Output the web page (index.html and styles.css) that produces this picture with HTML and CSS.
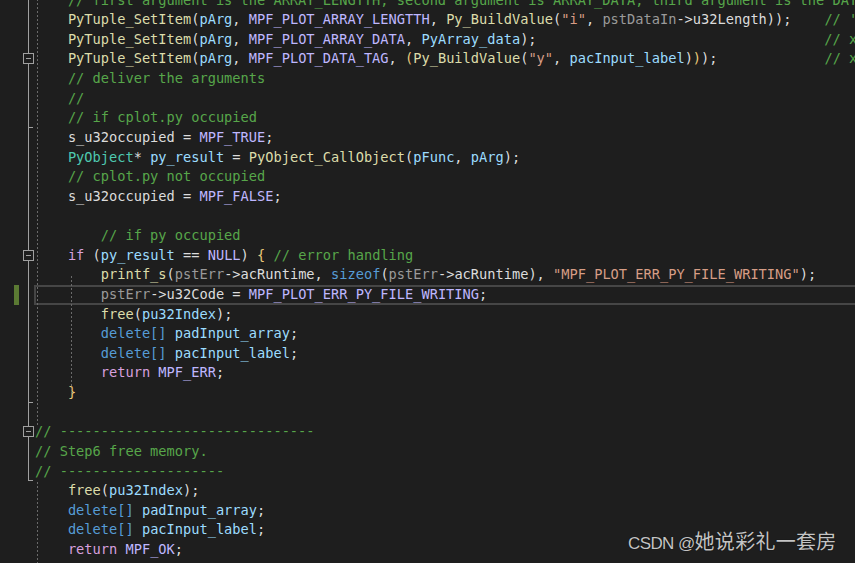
FILE: index.html
```html
<!DOCTYPE html>
<html lang="en">
<head>
<meta charset="utf-8">
<title>Editor</title>
<link rel="stylesheet" href="styles.css">
</head>
<body>
<div class="editor">
  <div class="guide g0a"></div>
  <div class="guide g0b"></div>
  <div class="guide g1"></div>

  <div class="row"><div class="gut ol"></div><div class="code"><span class="cm">    // first argument is the ARRAY_LENGTTH, second argument is ARRAY_DATA, third argument is the DATA_TAG</span></div></div>
  <div class="row"><div class="gut ol"></div><div class="code">    <span class="f">PyTuple_SetItem</span>(<span class="v">pArg</span>, <span class="m">MPF_PLOT_ARRAY_LENGTTH</span>, <span class="f">Py_BuildValue</span>(<span class="s">"i"</span>, <span class="p">pstDataIn</span>-&gt;u32Length));    <span class="cm">// '</span></div></div>
  <div class="row"><div class="gut ol"></div><div class="code">    <span class="f">PyTuple_SetItem</span>(<span class="v">pArg</span>, <span class="m">MPF_PLOT_ARRAY_DATA</span>, <span class="v">PyArray_data</span>);                                   <span class="cm">// x</span></div></div>
  <div class="row"><div class="gut ol box"></div><div class="code">    <span class="f">PyTuple_SetItem</span>(<span class="v">pArg</span>, <span class="m">MPF_PLOT_DATA_TAG</span>, <span class="b">(</span><span class="f">Py_BuildValue</span>(<span class="s">"y"</span>, <span class="v">pacInput_label</span>)<span class="b">)</span>);             <span class="cm">// x</span></div></div>
  <div class="row"><div class="gut ol"></div><div class="code"><span class="cm">    // deliver the arguments</span></div></div>
  <div class="row"><div class="gut ol"></div><div class="code"><span class="cm">    //</span></div></div>
  <div class="row"><div class="gut ol tick"></div><div class="code"><span class="cm">    // if cplot.py occupied</span></div></div>
  <div class="row"><div class="gut ol"></div><div class="code">    s_u32occupied = <span class="m">MPF_TRUE</span>;</div></div>
  <div class="row"><div class="gut ol"></div><div class="code">    <span class="t">PyObject</span>* <span class="v">py_result</span> = <span class="f">PyObject_CallObject</span>(<span class="v">pFunc</span>, <span class="v">pArg</span>);</div></div>
  <div class="row"><div class="gut ol"></div><div class="code"><span class="cm">    // cplot.py not occupied</span></div></div>
  <div class="row"><div class="gut ol"></div><div class="code">    s_u32occupied = <span class="m">MPF_FALSE</span>;</div></div>
  <div class="row"><div class="gut ol"></div><div class="code"> </div></div>
  <div class="row"><div class="gut ol"></div><div class="code"><span class="cm">        // if py occupied</span></div></div>
  <div class="row"><div class="gut ol box"></div><div class="code">    <span class="c">if</span> (<span class="v">py_result</span> == <span class="m">NULL</span>) <span class="b">{</span> <span class="cm">// error handling</span></div></div>
  <div class="row"><div class="gut ol"></div><div class="code">        <span class="f">printf_s</span>(<span class="p">pstErr</span>-&gt;acRuntime, <span class="k">sizeof</span>(<span class="p">pstErr</span>-&gt;acRuntime), <span class="s">"MPF_PLOT_ERR_PY_FILE_WRITING"</span>);</div></div>
  <div class="row cur"><div class="gut ol mark"></div><div class="code">        <span class="p">pstErr</span>-&gt;u32Code = <span class="m">MPF_PLOT_ERR_PY_FILE_WRITING</span>;</div></div>
  <div class="row"><div class="gut ol"></div><div class="code">        <span class="f">free</span>(<span class="v">pu32Index</span>);</div></div>
  <div class="row"><div class="gut ol"></div><div class="code">        <span class="k">delete[]</span> <span class="v">padInput_array</span>;</div></div>
  <div class="row"><div class="gut ol"></div><div class="code">        <span class="k">delete[]</span> <span class="v">pacInput_label</span>;</div></div>
  <div class="row"><div class="gut ol"></div><div class="code">        <span class="c">return</span> <span class="m">MPF_ERR</span>;</div></div>
  <div class="row"><div class="gut ol tick"></div><div class="code">    <span class="b">}</span></div></div>
  <div class="row"><div class="gut ol"></div><div class="code"> </div></div>
  <div class="row"><div class="gut ol box"></div><div class="code"><span class="cm">// -------------------------------</span></div></div>
  <div class="row"><div class="gut ol"></div><div class="code"><span class="cm">// Step6 free memory.</span></div></div>
  <div class="row"><div class="gut ol tick"></div><div class="code"><span class="cm">// --------------------</span></div></div>
  <div class="row"><div class="gut"></div><div class="code">    <span class="f">free</span>(<span class="v">pu32Index</span>);</div></div>
  <div class="row"><div class="gut"></div><div class="code">    <span class="k">delete[]</span> <span class="v">padInput_array</span>;</div></div>
  <div class="row"><div class="gut"></div><div class="code">    <span class="k">delete[]</span> <span class="v">pacInput_label</span>;</div></div>
  <div class="row"><div class="gut"></div><div class="code">    <span class="c">return</span> <span class="m">MPF_OK</span>;</div></div>

  <div class="watermark"><span class="wm-latin">CSDN @</span>她说彩礼一套房</div>
</div>
</body>
</html>
```

FILE: styles.css
```css
html, body {
  margin: 0;
  padding: 0;
  background: #1e1e1e;
  overflow: hidden;
  height: 100%;
}

.editor {
  position: relative;
  margin-top: -9.4px;
  font-family: "DejaVu Sans Mono", "Liberation Mono", monospace;
  font-size: 13.67px;
  color: #dcdcdc;
}

.row {
  display: flex;
  height: 19.63px;
  line-height: 19.63px;
  position: relative;
}

.gut {
  width: 35px;
  flex: none;
  position: relative;
}

.code {
  white-space: pre;
  flex: 1;
  overflow: hidden;
}

/* outlining line */
.gut.ol::before {
  content: "";
  position: absolute;
  left: 28px;
  top: 0;
  bottom: 0;
  width: 1px;
  background: #a0a0a0;
}
.gut.tick::after {
  content: "";
  position: absolute;
  left: 28px;
  bottom: 0;
  width: 5px;
  height: 1px;
  background: #a0a0a0;
}
.gut.box::after {
  content: "";
  position: absolute;
  left: 23px;
  top: 4px;
  width: 9px;
  height: 9px;
  border: 1px solid #a0a0a0;
  background: linear-gradient(#a0a0a0, #a0a0a0) center / 5px 1px no-repeat, #1e1e1e;
}
.gut.mark {
  background: linear-gradient(#5b7a33, #5b7a33) 14px 0 / 5px 100% no-repeat;
}

.row.cur::after {
  content: "";
  position: absolute;
  left: 34px;
  right: -2px;
  top: 0;
  bottom: 0;
  border: 2px solid #464646;
  pointer-events: none;
}

/* indent guides */
.guide {
  position: absolute;
  width: 1px;
  background: repeating-linear-gradient(to bottom, #6a6a6a 0 2px, transparent 2px 4px);
  z-index: 1;
}
.g0a { left: 37px; top: 0; height: 434px; }
.g0b { left: 37px; top: 491px; height: 90px; }
.g1 { left: 71px; top: 285px; height: 118px; }

/* tokens */
.cm { color: #57a64a; }
.f { color: #dcdcaa; }
.v { color: #9cdcfe; }
.m { color: #beb7ff; }
.s { color: #d69d85; }
.p { color: #9a9a9a; }
.k { color: #569cd6; }
.c { color: #d8a0df; }
.t { color: #4ec9b0; }
.b { color: #e8c97a; }

.watermark {
  position: absolute;
  left: 628px;
  top: 537px;
  font-family: "Noto Sans CJK SC", "Noto Sans", sans-serif;
  font-size: 20px;
  line-height: 26px;
  color: #c4c4c4;
  white-space: nowrap;
  letter-spacing: 0.3px;
  text-shadow: 0 0 1px #000;
}
.wm-latin {
  font-family: "Liberation Sans", sans-serif;
  font-size: 17px;
  letter-spacing: -0.6px;
}
```
